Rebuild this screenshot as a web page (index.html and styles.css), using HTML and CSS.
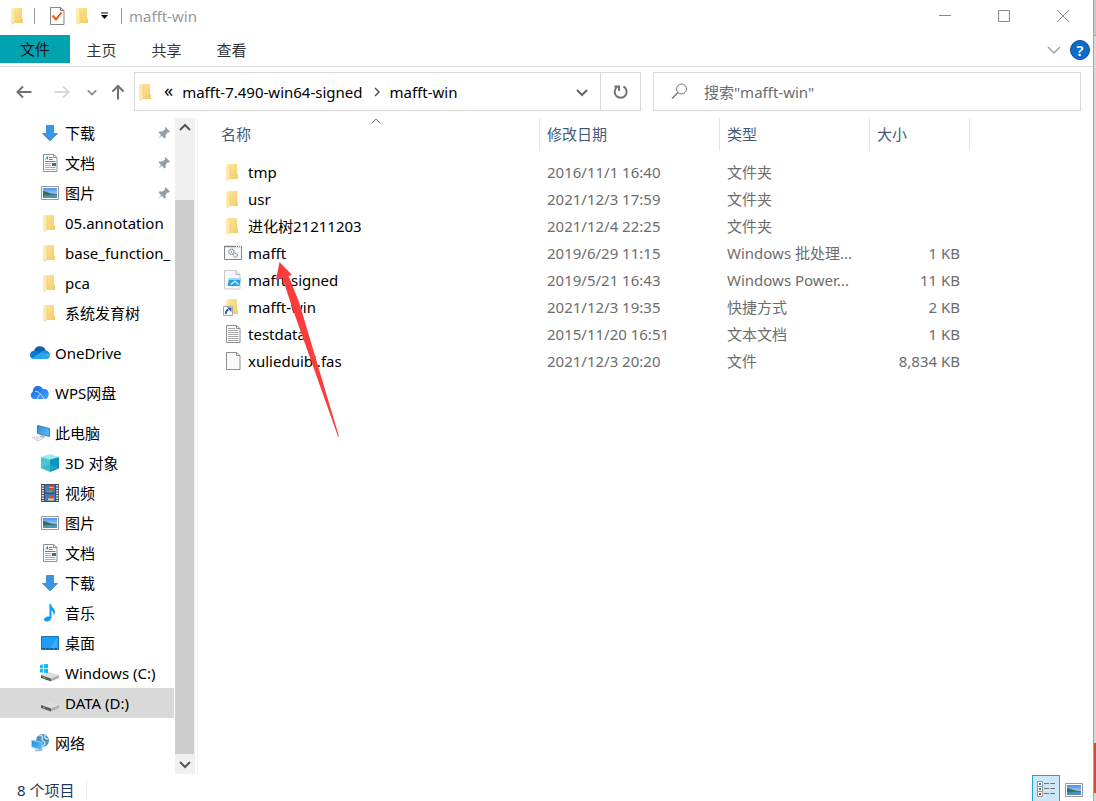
FILE: index.html
```html
<!DOCTYPE html>
<html lang="zh-CN">
<head>
<meta charset="utf-8">
<title>mafft-win</title>
<link rel="stylesheet" href="styles.css">
</head>
<body>
<svg class="defs" aria-hidden="true">
  <defs>
    <linearGradient id="gFolder" x1="0" y1="0" x2="1" y2="1"><stop offset="0" stop-color="#ffe49c"/><stop offset="1" stop-color="#f3cc66"/></linearGradient>
    <linearGradient id="gSky" x1="0" y1="0" x2="0" y2="1"><stop offset="0" stop-color="#4a90ea"/><stop offset="1" stop-color="#dff0fb"/></linearGradient>
    <linearGradient id="gScreen" x1="0" y1="0" x2="1" y2="1"><stop offset="0" stop-color="#1f8fe0"/><stop offset="1" stop-color="#5cc0ff"/></linearGradient>
    <linearGradient id="gCloud" x1="0" y1="0" x2="1" y2="1"><stop offset="0" stop-color="#1463e8"/><stop offset="1" stop-color="#45a4ff"/></linearGradient>
  </defs>
  <symbol id="folder" viewBox="0 0 20 20"><path d="M5 2h9v10l1 1v4H5z" fill="url(#gFolder)"/><path d="M3 2l4 2v12l-2 3-2-1z" fill="#ffe9ac"/><path d="M7 4v12l-2 2" fill="none" stroke="#eccb70" stroke-width=".7"/></symbol>
  <symbol id="down" viewBox="0 0 20 20"><path d="M6.500 2.500h7v8h4L10 17.800 2.500 10.500h4z" fill="#3a97e6" stroke="#2a7fcd" stroke-width=".8"/></symbol>
  <symbol id="doc" viewBox="0 0 20 20"><path d="M3.500 1.500h10l3.500 3v14H3.500z" fill="#fff" stroke="#8f8f8f"/><path d="M13.500 1.500v3H17" fill="none" stroke="#8f8f8f"/><path d="M5.500 6.500l2-3v3M9 4.500h3.500M9 6.500h3.500M5 8.500h10.500" stroke="#2491d6" fill="none"/><path d="M5 10.500h6M5 12.500h6M5 14.500h10.500M5 16.500h10.500" stroke="#aaa"/><path d="M12 10h4v3h-4z" fill="#316f9c"/></symbol>
  <symbol id="picture" viewBox="0 0 20 20"><path d="M1.500 3.500h17v13h-17z" fill="#fff" stroke="#999"/><path d="M3 5h14v10H3z" fill="url(#gSky)"/><path d="M3 8c4 0 5 3 14 3v2H3z" fill="#39705c"/><path d="M3 12.500l14-1V15H3z" fill="#4c93b8"/></symbol>
  <symbol id="onedrive" viewBox="0 0 20 20"><path d="M4 8C5 4 8 3 10.500 3.200 13 3.400 15 5 15.700 7.500L10 11z" fill="#0a5eb0"/><path d="M1 15C-1 12 0 8 4 7.700c3-.3 5 1.500 7 2.300L4 16z" fill="#0879d1"/><path d="M10 10c2-2 4-3 6-2.500 3 .5 4 3 4 4.500z" fill="#1490df"/><path d="M2 15l9-5.500 9 3c0 2-1.500 3.500-3.500 3.500H5c-1.500 0-2-.3-3-1z" fill="#29a6ec"/></symbol>
  <symbol id="wps" viewBox="0 0 20 20"><path d="M5 16c-3 0-4.500-2-4-4.500C1.300 9.500 2.500 9 3 8c0-3 2-5 5-5s4 1.500 5 3c3-.5 6 1.500 5.700 5C18.500 14 17.500 16 15 16z" fill="url(#gCloud)"/><path d="M5 8.500c3-.5 5 1.500 7 4.500l2 3" fill="none" stroke="#d9ebff" stroke-width=".8"/><path d="M10.500 11c-1.500 1-2.500 2.500-3 5" fill="none" stroke="#d9ebff" stroke-width=".8"/></symbol>
  <symbol id="pc" viewBox="0 0 20 20"><path d="M7.500 2.500l12 3v8l-12-3z" fill="url(#gScreen)" stroke="#557c99"/><path d="M1 14.500l6-1.500 7 2.800-6 2.700z" fill="#cdd3d8"/><path d="M3 15l7 2M5 14l7 2" stroke="#fff" stroke-width=".7"/><path d="M11 12l4 1-1 2-4-1z" fill="#aab3ba"/></symbol>
  <symbol id="cube" viewBox="0 0 20 20"><path d="M1 4l9-3 9 3-9 2.500z" fill="#9feaf0"/><path d="M1 4l9 2.500V19l-9-3.500z" fill="#4bc6d5"/><path d="M10 6.500L19 4v11.500L10 19z" fill="#0d93bf"/><path d="M2 14l8-3 8 3.500-8 3z" fill="#29b0cc" opacity=".6"/></symbol>
  <symbol id="video" viewBox="0 0 20 20"><path d="M1 1h18v18H1z" fill="#4c4c4c"/><path d="M5 2h10v7.500H5zM5 11h10v7H5z" fill="#3c79d8"/><path d="M2.800 2v16M17.200 2v16" stroke="#e8e8e8" stroke-width="2" stroke-dasharray="1.500 1"/><circle cx="11.500" cy="5" r="2.500" fill="#e44428"/><path d="M9.500 4.500h4" stroke="#f9d334"/><path d="M7 8l3-1 3 1v1.500H7z" fill="#65a53b"/><circle cx="12" cy="14" r="2" fill="#e44428"/><path d="M8 16.500h6" stroke="#f9d334" stroke-width="2"/></symbol>
  <symbol id="music" viewBox="0 0 20 20"><path d="M9.500 1H11c.5 4 4 4 4 8 0 2-1 3-1.500 3.500.5-3-.5-4-2-5V14c0 3-2.500 4.500-5 4.500-1.500 0-2.500-1-2.500-2 0-2 2.500-3.500 5.500-3z" fill="#149bf3"/></symbol>
  <symbol id="desktop" viewBox="0 0 20 20"><path d="M1.500 3.500h17v13h-17z" fill="#1e9cf6" stroke="#1274bd"/><path d="M10 15L17.500 4v11z" fill="#4bb5fb" opacity=".6"/><path d="M2 15.500h16" stroke="#0c5f9f" stroke-dasharray="3 1"/></symbol>
  <symbol id="drive" viewBox="0 0 20 20"><path d="M1 12l8-3 10 3-8 3.500z" fill="#dedede"/><path d="M1 12l10 3.500V18.500L1 15z" fill="#5c5c5c"/><path d="M11 15.500l8-3.500v3l-8 3.500z" fill="#b0b0b0"/><path d="M3 14.500l2 .7" stroke="#4bea70"/></symbol>
  <symbol id="windrive" viewBox="0 0 20 20"><use href="#drive"/><path d="M0 2l3-.5v3.700H0zM4 1.300L8 1v4.200H4zM0 6h3v3.700L0 9.300zM4 6h4v4.200L4 9.800z" fill="#0bbcf2"/></symbol>
  <symbol id="network" viewBox="0 0 20 20"><circle cx="12.500" cy="7.500" r="6.500" fill="#4b91b8"/><path d="M9 3c3-2 4 1 3 3s3 2 3 4-2 3-3 3M15 2c-1 3 1 4 3 4" fill="none" stroke="#b8dfed" stroke-width="1.500"/><path d="M1.500 7l10.500 2.500v8L1.500 14z" fill="url(#gScreen)" stroke="#a7d2ec"/><path d="M5 17.500h6" stroke="#aab7be" stroke-width="1.500"/></symbol>
  <symbol id="bat" viewBox="0 0 20 20"><path d="M1.500 3.500h17v13h-17z" fill="#f8f8f8" stroke="#82868a"/><path d="M1 3.500h18" stroke="#82868a" stroke-width="1.500"/><path d="M13 3.500h5" stroke="#fff" stroke-dasharray="1 1"/><circle cx="8.500" cy="8.800" r="2.600" fill="none" stroke="#7d858c" stroke-width="1.200" stroke-dasharray="1.500 .5"/><circle cx="8.500" cy="8.800" r=".8" fill="#7d858c"/><circle cx="12.500" cy="12.300" r="2" fill="#e7f2f8" stroke="#86abc1" stroke-width="1.200" stroke-dasharray="1.500 .5"/></symbol>
  <symbol id="ps" viewBox="0 0 20 20"><path d="M1.500 .5h11.500l4 4v14.500h-15.500z" fill="#f7f8f9" stroke="#c7cbcf"/><path d="M13 .5v4h4" fill="none" stroke="#aaafb3"/><path d="M6 8h12l-1.500 8H4.500z" fill="#2ba0df"/><path d="M6 8h12l-.4 2h-12z" fill="#9bd6f3"/><path d="M8 14.500l4-3.500 3.500 3.500" fill="none" stroke="#d9f1fc" stroke-width="1.200"/></symbol>
  <symbol id="shortcut" viewBox="0 0 20 20"><use href="#folder"/><path d="M.5 9.500h9v9h-9z" fill="#fff" stroke="#aaa"/><path d="M3 17c-.5-3 1-4 2.500-4" stroke="#1d5aa6" stroke-width="1.800" fill="none"/><path d="M4 10.500h4.500V15z" fill="#1d5aa6"/></symbol>
  <symbol id="text" viewBox="0 0 20 20"><path d="M3.500 1.500h10l3.500 3v14H3.500z" fill="#fff" stroke="#8f8f8f"/><path d="M13.500 1.500v3H17" fill="none" stroke="#8f8f8f"/><path d="M5 4.500h7M5 6.500h10.500M5 8.500h10.500M5 10.500h10.500M5 12.500h10.500M5 14.500h10.500M5 16.500h10.500" stroke="#a5a5a5"/></symbol>
  <symbol id="file" viewBox="0 0 20 20"><path d="M3.500 1.500h10l3.500 3v14H3.500z" fill="#fafafa" stroke="#8f8f8f"/><path d="M13.500 1.500v3H17" fill="none" stroke="#8f8f8f"/></symbol>
  <symbol id="check" viewBox="0 0 20 20"><path d="M3.500 1.500h10l3.500 3v14H3.500z" fill="#fafafa" stroke="#858585"/><path d="M13.500 1.500v3H17" fill="none" stroke="#858585"/><path d="M5.500 9.500l3.500 4 5.500-7" fill="none" stroke="#ec5a18" stroke-width="2"/></symbol>
  <symbol id="pin" viewBox="0 0 14 14"><path d="M8.500 1L13 5.500l-1.500 1h-1L8.500 9l.3 2.500L7.500 12.500 4.700 9.800 1 13l3-4L1.500 6.300 2.800 5.200l2.500.3L8 3.500V2z" fill="#949ea6"/></symbol>
  <symbol id="chev" viewBox="0 0 12 12"><path d="M1 4l5 5 5-5" fill="none" stroke="currentColor" stroke-width="2"/></symbol>
</svg>

<div class="window">
  <header class="titlebar">
    <svg class="icon"><use href="#folder"/></svg>
    <span class="bar bar-first"></span>
    <button class="bare" aria-label="属性"><svg class="icon"><use href="#check"/></svg></button>
    <button class="bare quick-folder" aria-label="新建文件夹"><svg class="icon"><use href="#folder"/></svg></button>
    <button class="bare quick-more" aria-label="自定义快速访问工具栏"><svg width="9" height="8" viewBox="0 0 9 8"><path d="M1 1h7" stroke="#000"/><path d="M1 3h7L4.500 7z"/></svg></button>
    <span class="bar bar-last"></span>
    <h1 class="title">mafft-win</h1>
    <div class="controls">
      <button class="bare" aria-label="最小化"><svg width="14" height="14" viewBox="0 0 14 14"><path d="M1 6.500h12"/></svg></button>
      <button class="bare" aria-label="最大化"><svg width="14" height="14" viewBox="0 0 14 14"><path d="M1.500 1.500h11v11h-11z"/></svg></button>
      <button class="bare" aria-label="关闭"><svg width="14" height="14" viewBox="0 0 14 14"><path d="M1 1l12 12M13 1L1 13"/></svg></button>
    </div>
  </header>

  <nav class="tabs">
    <button class="tab tab-file">文件</button>
    <button class="tab">主页</button>
    <button class="tab">共享</button>
    <button class="tab">查看</button>
    <button class="bare expand" aria-label="展开功能区"><svg width="14" height="14" viewBox="0 0 14 14"><path d="M1 4l6 6 6-6" fill="none" stroke="#a3a3a3" stroke-width="1.500"/></svg></button>
    <button class="help" aria-label="帮助">?</button>
  </nav>

  <div class="toolbar">
    <button class="bare nav-back" aria-label="后退"><svg width="16" height="16" viewBox="0 0 16 16"><path d="M15.500 8H2M7 2.500L1.500 8 7 13.500"/></svg></button>
    <button class="bare nav-forward" aria-label="前进"><svg width="16" height="16" viewBox="0 0 16 16"><path d="M.5 8H14M9 2.500L14.500 8 9 13.500"/></svg></button>
    <button class="bare nav-recent" aria-label="最近浏览"><svg width="10" height="10"><use href="#chev"/></svg></button>
    <button class="bare nav-up" aria-label="上移"><svg width="14" height="16" viewBox="0 0 14 16"><path d="M7 15.500V2M1.500 7.500L7 2l5.500 5.500"/></svg></button>
    <div class="address">
      <svg class="icon"><use href="#folder"/></svg>
      <button class="bare laquo">«</button>
      <button class="bare">mafft-7.490-win64-signed</button>
      <svg class="crumb-sep" width="8" height="10" viewBox="0 0 8 10"><path d="M2 1l4 4-4 4" fill="none" stroke="#555" stroke-width="1.500"/></svg>
      <button class="bare">mafft-win</button>
      <button class="bare drop" aria-label="以前的位置"><svg width="12" height="12"><use href="#chev"/></svg></button>
      <button class="bare refresh" aria-label="刷新"><svg width="16" height="16" viewBox="0 0 16 16"><path d="M10.500 2.500A6 6 0 1 1 4 3M1.500 2.500H6V7" fill="none" stroke="#727272" stroke-width="2"/></svg></button>
    </div>
    <label class="search">
      <svg width="17" height="17" viewBox="0 0 17 17"><circle cx="10.500" cy="6" r="5" fill="none" stroke="#777"/><path d="M7 9.500L1 15.500" stroke="#777" stroke-width="1.500"/></svg>
      <input type="text" aria-label="搜索" placeholder='搜索"mafft-win"'>
    </label>
  </div>

  <main class="content">
    <nav class="tree">
      <ul>
        <li><a href="#"><svg class="icon"><use href="#down"/></svg><span>下载</span><svg class="pin"><use href="#pin"/></svg></a></li>
        <li><a href="#"><svg class="icon"><use href="#doc"/></svg><span>文档</span><svg class="pin"><use href="#pin"/></svg></a></li>
        <li><a href="#"><svg class="icon"><use href="#picture"/></svg><span>图片</span><svg class="pin"><use href="#pin"/></svg></a></li>
        <li><a href="#"><svg class="icon"><use href="#folder"/></svg><span>05.annotation</span></a></li>
        <li><a href="#"><svg class="icon"><use href="#folder"/></svg><span>base_function_</span></a></li>
        <li><a href="#"><svg class="icon"><use href="#folder"/></svg><span>pca</span></a></li>
        <li><a href="#"><svg class="icon"><use href="#folder"/></svg><span>系统发育树</span></a></li>
      </ul>
      <ul><li class="root"><a href="#"><svg class="icon"><use href="#onedrive"/></svg><span>OneDrive</span></a></li></ul>
      <ul><li class="root"><a href="#"><svg class="icon"><use href="#wps"/></svg><span>WPS网盘</span></a></li></ul>
      <ul>
        <li class="root"><a href="#"><svg class="icon"><use href="#pc"/></svg><span>此电脑</span></a></li>
        <li><a href="#"><svg class="icon"><use href="#cube"/></svg><span>3D 对象</span></a></li>
        <li><a href="#"><svg class="icon"><use href="#video"/></svg><span>视频</span></a></li>
        <li><a href="#"><svg class="icon"><use href="#picture"/></svg><span>图片</span></a></li>
        <li><a href="#"><svg class="icon"><use href="#doc"/></svg><span>文档</span></a></li>
        <li><a href="#"><svg class="icon"><use href="#down"/></svg><span>下载</span></a></li>
        <li><a href="#"><svg class="icon"><use href="#music"/></svg><span>音乐</span></a></li>
        <li><a href="#"><svg class="icon"><use href="#desktop"/></svg><span>桌面</span></a></li>
        <li><a href="#"><svg class="icon"><use href="#windrive"/></svg><span>Windows (C:)</span></a></li>
        <li class="selected"><a href="#"><svg class="icon"><use href="#drive"/></svg><span>DATA (D:)</span></a></li>
      </ul>
      <ul><li class="root"><a href="#"><svg class="icon"><use href="#network"/></svg><span>网络</span></a></li></ul>
    </nav>
    <div class="scroll">
      <button class="bare scroll-up" aria-label="向上滚动"><svg width="12" height="12"><use href="#chev"/></svg></button>
      <div class="before"></div>
      <div class="thumb"></div>
      <button class="bare" aria-label="向下滚动"><svg width="12" height="12"><use href="#chev"/></svg></button>
    </div>
    <section class="files">
      <table>
        <colgroup><col class="c-name"><col class="c-date"><col class="c-type"><col class="c-size"></colgroup>
        <thead>
          <tr>
            <th><div>名称<svg class="sort" width="10" height="6" viewBox="0 0 10 6"><path d="M.5 5.500L5 1l4.500 4.500" fill="none" stroke="#777"/></svg></div></th>
            <th><div>修改日期</div></th><th><div>类型</div></th><th><div>大小</div></th>
          </tr>
        </thead>
        <tbody>
          <tr><td><div class="name"><svg class="icon"><use href="#folder"/></svg>tmp</div></td><td>2016/11/1 16:40</td><td>文件夹</td><td></td></tr>
          <tr><td><div class="name"><svg class="icon"><use href="#folder"/></svg>usr</div></td><td>2021/12/3 17:59</td><td>文件夹</td><td></td></tr>
          <tr><td><div class="name"><svg class="icon"><use href="#folder"/></svg>进化树21211203</div></td><td>2021/12/4 22:25</td><td>文件夹</td><td></td></tr>
          <tr><td><div class="name"><svg class="icon"><use href="#bat"/></svg>mafft</div></td><td>2019/6/29 11:15</td><td>Windows 批处理...</td><td>1 KB</td></tr>
          <tr><td><div class="name"><svg class="icon"><use href="#ps"/></svg>mafft-signed</div></td><td>2019/5/21 16:43</td><td>Windows Power...</td><td>11 KB</td></tr>
          <tr><td><div class="name"><svg class="icon"><use href="#shortcut"/></svg>mafft-win</div></td><td>2021/12/3 19:35</td><td>快捷方式</td><td>2 KB</td></tr>
          <tr><td><div class="name"><svg class="icon"><use href="#text"/></svg>testdata</div></td><td>2015/11/20 16:51</td><td>文本文档</td><td>1 KB</td></tr>
          <tr><td><div class="name"><svg class="icon"><use href="#file"/></svg>xulieduibi.fas</div></td><td>2021/12/3 20:20</td><td>文件</td><td>8,834 KB</td></tr>
        </tbody>
      </table>
      <svg class="arrow" width="64" height="175" viewBox="0 0 64 175" aria-hidden="true"><path d="M4.500 0L17 13l-3.500 1L24 40l40 134.500h-1L17 45 7.500 16 1 18z" fill="#fb3c3c"/></svg>
    </section>
  </main>

  <footer class="status">
    <span class="count">8 个项目</span>
    <button class="view view-on" aria-label="详细信息"><svg width="20" height="20" viewBox="0 0 20 20"><path d="M1.500 1.500h5v5h-5zM1.500 6.500h5v5h-5zM1.500 11.500h5v5h-5z" fill="#fff" stroke="#999"/><path d="M3 3h2v2H3z" fill="#327fbd"/><path d="M3 8h2v2H3z" fill="#4a8661"/><path d="M3 13h2v2H3z" fill="#c53434"/><path d="M8 3.500h5M14 3.500h5M8 8.500h5M14 8.500h5M8 13.500h5M14 13.500h5" stroke="#777"/></svg></button>
    <button class="view" aria-label="大图标"><svg class="icon"><use href="#picture"/></svg></button>
  </footer>
</div>
<div class="behind" aria-hidden="true"><div class="behind-top"></div><div class="behind-mid"></div><div class="behind-red"></div><div class="behind-end"></div></div>
</body>
</html>
```

FILE: styles.css
```css
* { box-sizing: border-box; }
body {
  margin: 0;
  display: flex;
  min-height: 100vh;
  background: #fff;
  color: #000;
  font: 15px/20px "Noto Sans", "Noto Sans CJK SC", sans-serif;
}
button, input { font: inherit; color: inherit; }
button { cursor: default; }
.bare { padding: 0; border: 0; background: none; display: flex; align-items: center; justify-content: center; }
.defs { position: absolute; width: 0; height: 0; }
.icon { width: 20px; height: 20px; flex: none; display: block; }
.window { flex: 1; min-width: 0; display: flex; flex-direction: column; }

.titlebar { display: flex; align-items: center; height: 35px; padding: 0 8px 3px 8px; }
.bar { width: 1px; height: 16px; background: #999; }
.bar-first { margin: 0 12px 0 6px; }
.quick-folder { margin-left: 6px; }
.quick-more { margin-left: 7px; }
.bar-last { margin: 0 7px 0 12px; }
.title { margin: 0; font-size: 15px; font-weight: 400; color: #999; }
.controls { margin-left: auto; display: flex; gap: 14px; }
.controls button { width: 45px; height: 30px; }
.controls path { fill: none; stroke: #8a8a8a; }

.tabs { display: flex; align-items: flex-start; height: 32px; padding-right: 3px; border-bottom: 1px solid #dadada; }
.tab { width: 65px; height: 28px; padding: 2px 2px 0 0; border: 0; background: none; color: #333; }
.tab-file { width: 70px; padding: 0; background: #00a4b0; color: #111; }
.expand { margin: 8px 9px 0 auto; }
.help { width: 20px; height: 20px; margin-top: 5px; padding: 0; border: 1px solid #0b4f92; border-radius: 50%; background: #0b6ccc; color: #fff; font-size: 15px; line-height: 18px; font-weight: 600; }

.toolbar { display: flex; align-items: center; padding: 5px 12px 7px 16px; }
.toolbar > button path { fill: none; stroke: #707070; stroke-width: 2; }
.toolbar > .nav-forward path { stroke: #d8d8d8; }
.nav-forward { margin-left: 22px; }
.nav-recent { margin-left: 17px; color: #8a8a8a; }
.nav-up { margin-left: 14px; }
.address { flex: 507 1 507px; height: 39px; margin-left: 9px; padding-left: 1px; display: flex; align-items: center; border: 1px solid #d9d9d9; }
.laquo { margin: 0 9px 3px 8px; font-size: 18px; }
.crumb-sep { margin: 0 9px 0 10px; }
.drop { margin-left: auto; width: 36px; color: #666; }
.refresh { width: 40px; align-self: stretch; border-left: 1px solid #d9d9d9; }
.search { flex: 428 1 428px; height: 39px; margin-left: 12px; display: flex; align-items: center; gap: 16px; padding-left: 17px; border: 1px solid #d9d9d9; }
.search input { flex: 1; min-width: 0; padding: 0; border: 0; outline: 0; background: none; }
.search input::placeholder { color: #6d6d6d; opacity: 1; }

.content { flex: 1; display: flex; }
.tree { width: 174px; flex: none; }
.tree ul { margin: 0 0 10px; padding: 0; list-style: none; }
.tree a { display: flex; align-items: center; gap: 5px; height: 30px; padding-left: 40px; color: #000; text-decoration: none; white-space: nowrap; overflow: hidden; }
.tree .root a { padding-left: 30px; }
.tree .selected { background: #d9d9d9; }
.pin { width: 14px; height: 14px; margin: 0 3px 0 auto; }
.tree ul:last-child { margin-bottom: 15px; }
.scroll { width: 20px; flex: none; margin-left: 1px; display: flex; flex-direction: column; background: #f0f0f0; color: #555; }
.scroll button { height: 20px; width: 19px; }
.scroll-up svg { transform: rotate(180deg); }
.before { flex: 62; }
.thumb { flex: 554; margin-right: 1px; background: #cdcdcd; }
.files { flex: 1; min-width: 0; position: relative; margin-left: 2px; padding-left: 15px; border-left: 1px solid #f0f0f0; }
table { width: 757px; table-layout: fixed; border-collapse: collapse; }
.c-name { width: 327px; }
.c-date { width: 180px; }
.c-type { width: 150px; }
.c-size { width: 100px; }
th { padding: 0 0 7px; font-weight: 400; text-align: left; color: #44597a; }
th div { position: relative; height: 33px; padding: 6px 7px; border-right: 1px solid #e5e5e5; }
th:first-child div { padding-left: 8px; }
.sort { position: absolute; top: 0; left: calc(50% - 5px); }
td { height: 27px; padding: 0 10px 0 7px; color: #6d6d6d; white-space: nowrap; }
td:first-child { padding-left: 10px; color: #000; }
td:last-child { text-align: right; }
.name { display: flex; align-items: center; gap: 5px; }
.arrow { position: absolute; left: 77px; top: 144px; }

.status { display: flex; align-items: flex-end; height: 27px; padding: 0 5px 0 17px; color: #1e395b; }
.count { margin: 0 auto 1px 0; padding: 0 12px 0 0; border-right: 1px solid #f0f0f0; }
.view { width: 28px; height: 26px; padding: 2px 0 0; border: 1px solid transparent; border-bottom: 0; background: none; display: flex; align-items: center; justify-content: center; }
.view-on { border-color: #26a0da; background: #cce8f6; }

.behind { width: 3px; display: flex; flex-direction: column; border-left: 1px solid #a5a5a5; background: #d9d9d9; }
.behind-top { flex: 35; background: #c6c6c6; border-bottom: 1px solid #aaa; }
.behind-mid { flex: 708; }
.behind-red { flex: 50; background: #d24b2e; }
.behind-end { flex: 8; }
```
